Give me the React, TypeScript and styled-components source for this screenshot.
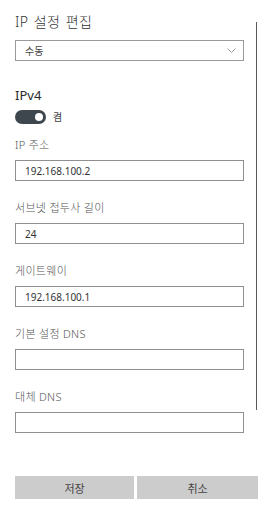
import React from 'react';
import styled, { createGlobalStyle } from 'styled-components';

const GlobalStyle = createGlobalStyle`
    body {
        margin: 0;
        background: #ffffff;
        font-family: "Noto Sans", "Noto Sans CJK KR", sans-serif;
        color: #333333;
    }
`;

const Page = styled.div`
    position: relative;
    width: 273px;
    height: 512px;
    padding: 12px 0 0 15px;
    box-sizing: border-box;
    overflow: hidden;
`;

const ScrollBar = styled.div`
    position: absolute;
    left: 256px;
    top: 22px;
    width: 1px;
    height: 388px;
    background: #5a5a5a;
`;

const Title = styled.div`
    font-size: 14px;
    line-height: 19px;
    color: #333333;
    font-weight: 300;
    letter-spacing: 0.5px;
    word-spacing: 1px;
`;

const Select = styled.div`
    margin-top: 9px;
    width: 229px;
    height: 21px;
    box-sizing: border-box;
    border: 1px solid #9a9a9a;
    display: flex;
    align-items: center;
    justify-content: space-between;
    padding: 0 7px 0 9px;
    font-size: 10px;
    color: #444444;
`;

const Section = styled.div`
    margin-top: 26px;
    font-size: 13px;
    line-height: 17px;
    color: #2a2a2a;
`;

const ToggleRow = styled.div`
    margin-top: 5px;
    display: flex;
    align-items: center;
    gap: 7px;
    font-size: 10px;
    color: #444444;
`;

const Toggle = styled.div<{ on: boolean }>`
    width: 31px;
    height: 14px;
    border-radius: 7px;
    background: ${(p) => (p.on ? '#3d474d' : '#ffffff')};
    display: flex;
    align-items: center;
    justify-content: ${(p) => (p.on ? 'flex-end' : 'flex-start')};
    padding: 0 3px;
    box-sizing: border-box;
`;

const Knob = styled.div`
    width: 8px;
    height: 8px;
    border-radius: 50%;
    background: #ffffff;
`;

const FieldList = styled.div`
    margin-top: 14px;
    display: flex;
    flex-direction: column;
    gap: 20px;
`;

const Field = styled.div`
    display: flex;
    flex-direction: column;
`;

const Label = styled.div`
    font-size: 11px;
    line-height: 14px;
    color: #555555;
    font-weight: 300;
    letter-spacing: 0.3px;
    height: 14px;
    margin-bottom: 8px;
`;

const Input = styled.div`
    width: 229px;
    height: 21px;
    box-sizing: border-box;
    border: 1px solid #8f8f8f;
    padding: 0 9px;
    display: flex;
    align-items: center;
    font-size: 10px;
    color: #333333;
`;

const Buttons = styled.div`
    margin-top: 43px;
    display: flex;
    gap: 3px;
`;

const Button = styled.div<{ w: number }>`
    width: ${(p) => p.w}px;
    height: 23px;
    background: #cccccc;
    display: flex;
    align-items: center;
    justify-content: center;
    font-size: 11px;
    color: #444444;
`;

const fields = [
    { label: 'IP 주소', value: '192.168.100.2' },
    { label: '서브넷 접두사 길이', value: '24' },
    { label: '게이트웨이', value: '192.168.100.1' },
    { label: '기본 설정 DNS', value: '' },
    { label: '대체 DNS', value: '' },
];

const Chevron = () => (
    <svg width="9" height="5" viewBox="0 0 9 5">
        <path d="M0.5 0.5 L4.5 4.5 L8.5 0.5" fill="none" stroke="#9a9a9a" strokeWidth="1" />
    </svg>
);

export default function App() {
    return (
        <Page>
            <GlobalStyle />
            <ScrollBar />
            <Title>IP 설정 편집</Title>
            <Select>
                <span>수동</span>
                <Chevron />
            </Select>
            <Section>IPv4</Section>
            <ToggleRow>
                <Toggle on={true}>
                    <Knob />
                </Toggle>
                <span>켬</span>
            </ToggleRow>
            <FieldList>
                {fields.map((f) => (
                    <Field key={f.label}>
                        <Label>{f.label}</Label>
                        <Input>{f.value}</Input>
                    </Field>
                ))}
            </FieldList>
            <Buttons>
                <Button w={119}>저장</Button>
                <Button w={121}>취소</Button>
            </Buttons>
        </Page>
    );
}
